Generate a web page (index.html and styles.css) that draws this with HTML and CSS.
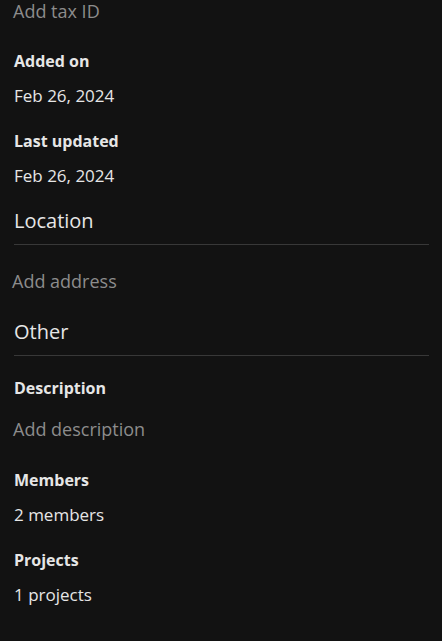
FILE: index.html
```html
<!DOCTYPE html>
<html lang="en">
<head>
    <meta charset="UTF-8">
    <meta name="viewport" content="width=device-width, initial-scale=1.0">
    <title>Organization details</title>
    <link rel="stylesheet" href="styles.css">
</head>
<body>
    <div class="panel">
        <button type="button" class="add-link first">Add tax ID</button>

        <div class="field">
            <div class="field-label">Added on</div>
            <div class="field-value">Feb 26, 2024</div>
        </div>
        <div class="field">
            <div class="field-label">Last updated</div>
            <div class="field-value">Feb 26, 2024</div>
        </div>

        <h3 class="section-title">Location</h3>
        <button type="button" class="add-link address">Add address</button>

        <h3 class="section-title">Other</h3>
        <div class="field">
            <div class="field-label">Description</div>
            <button type="button" class="add-link desc">Add description</button>
        </div>
        <div class="field">
            <div class="field-label">Members</div>
            <div class="field-value">2 members</div>
        </div>
        <div class="field">
            <div class="field-label">Projects</div>
            <div class="field-value">1 projects</div>
        </div>
    </div>
</body>
</html>
```

FILE: styles.css
```css
body {
    margin: 0;
    background-color: #121212;
    color: #e6e6e6;
    font-family: "Open Sans", Arial, sans-serif;
    font-size: 16px;
}
.panel {
    display: flex;
    flex-direction: column;
    align-items: flex-start;
    padding: 0 13px 0 14px;
    margin-top: -1px;
}
.add-link {
    background: none;
    border: none;
    padding: 0;
    margin: 0;
    font-family: inherit;
    font-size: 18px;
    line-height: 24px;
    color: #8c8c8c;
    cursor: pointer;
    text-align: left;
}
.add-link.first {
    margin-left: -1px;
    margin-bottom: 26px;
}
.add-link.address {
    margin-left: -2px;
    margin-top: 4px;
    margin-bottom: 27px;
}
.add-link.desc {
    margin-left: -1px;
    margin-top: 6px;
    margin-bottom: 6px;
}
.field {
    display: flex;
    flex-direction: column;
    align-items: flex-start;
    margin-bottom: 21px;
}
.field-label {
    font-weight: 700;
    line-height: 24px;
    margin-bottom: 11px;
}
.field-value {
    font-size: 17px;
    line-height: 24px;
}
.section-title {
    align-self: stretch;
    margin: -2px 0 20px;
    padding-bottom: 9px;
    font-size: 20px;
    font-weight: 400;
    line-height: 28px;
    border-bottom: 1px solid #383838;
}
```
